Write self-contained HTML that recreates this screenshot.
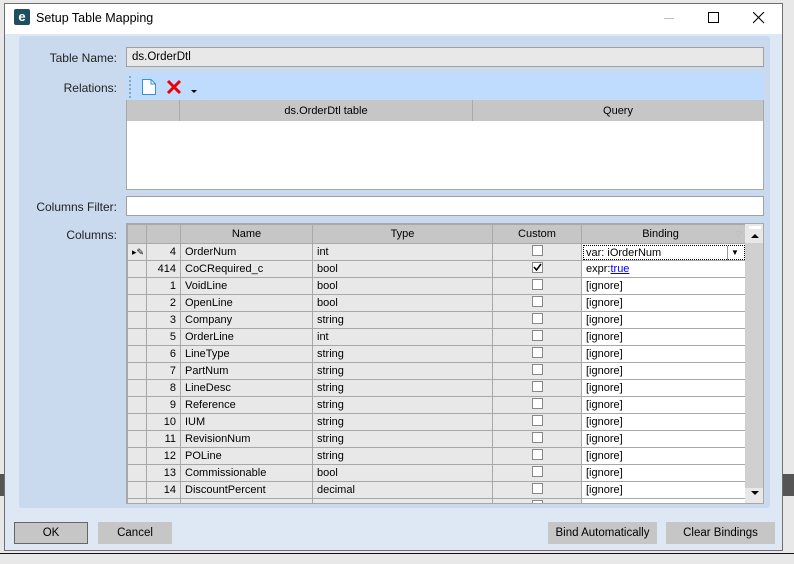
<!DOCTYPE html>
<html><head><meta charset="utf-8"><style>
*{box-sizing:border-box;margin:0;padding:0}
body{width:794px;height:564px;overflow:hidden;background:#e8e8e8;font-family:"Liberation Sans",sans-serif;font-size:11px;color:#000;position:relative}
.a{position:absolute}
.lbl{position:absolute;right:677px;text-align:right;font-size:12px;color:#222}
table{border-collapse:collapse;table-layout:fixed}
td{border:1px solid #a8a8a8;height:17px;padding:0 4px;white-space:nowrap;overflow:hidden;font-size:11px;vertical-align:middle;line-height:14px}
.btn{position:absolute;top:522px;height:22px;background:#c6c6c6;font-size:11.5px;text-align:center;line-height:22px}
.cb{display:inline-block;width:11px;height:11px;border:1px solid #888;background:#fff;vertical-align:middle;margin-top:-3px}
</style></head><body>
<div class="a" style="left:0;top:474px;width:5px;height:22px;background:#555"></div>
<div class="a" style="left:782px;top:474px;width:12px;height:22px;background:#555"></div>
<div class="a" style="left:0;top:553px;width:794px;height:1px;background:#111"></div>
<div class="a" style="left:4px;top:3px;width:779px;height:548px;border:1px solid #6f6f6f;background:#dde8f4"></div>
<div class="a" style="left:5px;top:4px;width:777px;height:30px;background:#fff"></div>
<div class="a" style="left:14px;top:9px;width:16px;height:16px;background:#1f4f5f;border-radius:2px;color:#fff;font-weight:bold;font-size:13px;line-height:15px;text-align:center">e</div>
<div class="a" style="left:36px;top:11px;font-size:12.5px">Setup Table Mapping</div>
<div class="a" style="left:664px;top:18px;width:10px;height:1px;background:#bbb"></div>
<div class="a" style="left:708px;top:12px;width:11px;height:11px;border:1px solid #000"></div>
<svg class="a" style="left:753px;top:12px" width="12" height="12"><path d="M0 0L11 11M11 0L0 11" stroke="#000" stroke-width="1.1"/></svg>
<div class="a" style="left:19px;top:36px;width:751px;height:472px;background:#c9daee;border-radius:3px"></div>
<div class="lbl" style="top:51px">Table Name:</div>
<div class="a" style="left:126px;top:47px;width:638px;height:20px;background:#e8e8e8;border:1px solid #a0a0a0;padding:3px 5px;font-size:11.5px;line-height:13px">ds.OrderDtl</div>
<div class="lbl" style="top:81px">Relations:</div>
<div class="a" style="left:126px;top:73px;width:638px;height:27px;background:#bfdcff"></div>
<div class="a" style="left:129px;top:76px;width:2px;height:22px;border-left:2px dotted #8aa"></div>
<svg class="a" style="left:141px;top:78px" width="16" height="18"><path d="M1.5 1.5H10L14.5 6V16.5H1.5Z" fill="#fff" stroke="#3a8fd8"/><path d="M10 1.5V6H14.5" fill="none" stroke="#3a8fd8"/></svg>
<svg class="a" style="left:166px;top:79px" width="16" height="16"><path d="M2 2L14 14M14 2L2 14" stroke="#e00" stroke-width="3"/></svg>
<div class="a" style="left:191px;top:90px;width:0;height:0;border-left:3px solid transparent;border-right:3px solid transparent;border-top:3px solid #000"></div>
<div class="a" style="left:126px;top:100px;width:638px;height:90px;background:#fff;border:1px solid #a8a8a8"></div>
<div class="a" style="left:127px;top:100px;width:636px;height:21px;background:#c6c6c6;display:flex;font-size:11px;line-height:22px">
<div style="width:53px;border-right:1px solid #aaa"></div><div style="width:293px;border-right:1px solid #aaa;text-align:center">ds.OrderDtl table</div><div style="flex:1;text-align:center">Query</div></div>
<div class="lbl" style="top:200px">Columns Filter:</div>
<div class="a" style="left:126px;top:196px;width:638px;height:20px;background:#fff;border:1px solid #a0a0a0"></div>
<div class="lbl" style="top:228px">Columns:</div>
<div class="a" style="left:126px;top:223px;width:638px;height:281px;background:#fff;border:1px solid #a8a8a8;overflow:hidden">
<table style="width:619px">
<colgroup><col style="width:19px"><col style="width:34px"><col style="width:132px"><col style="width:180px"><col style="width:89px"><col style="width:165px"></colgroup>
<tr style="background:#c6c6c6;text-align:center"><td style="height:19px"></td><td></td><td>Name</td><td>Type</td><td>Custom</td><td>Binding <span style="float:right;color:#bbb;font-size:9px">▽</span></td></tr>
<tbody id="b"></tbody></table>
<div class="a" style="left:618px;top:0;width:19px;height:281px;background:#e8e8e8"></div>
<div class="a" style="left:622px;top:2px;width:12px;height:3px;background:#fff"></div>
<div class="a" style="left:624px;top:10px;border-left:4px solid transparent;border-right:4px solid transparent;border-bottom:4px solid #000"></div>
<div class="a" style="left:618px;top:19px;width:19px;height:245px;background:#d0d0d0"></div>
<div class="a" style="left:624px;top:267px;border-left:4px solid transparent;border-right:4px solid transparent;border-top:4px solid #000"></div>
</div>
<div class="btn" style="left:14px;width:74px;border:1px solid #666;line-height:20px">OK</div>
<div class="btn" style="left:98px;width:74px">Cancel</div>
<div class="btn" style="left:548px;width:109px">Bind Automatically</div>
<div class="btn" style="left:666px;width:109px">Clear Bindings</div>
<script>
var r=[[4,"OrderNum","int"],[414,"CoCRequired_c","bool"],[1,"VoidLine","bool"],[2,"OpenLine","bool"],[3,"Company","string"],[5,"OrderLine","int"],[6,"LineType","string"],[7,"PartNum","string"],[8,"LineDesc","string"],[9,"Reference","string"],[10,"IUM","string"],[11,"RevisionNum","string"],[12,"POLine","string"],[13,"Commissionable","bool"],[14,"DiscountPercent","decimal"],["","",""]];
var h="";r.forEach(function(x,i){var b=i==0?'<div style="border:1px dotted #000;margin:0 -3px;padding:0 2px;height:15px;line-height:14px">var: iOrderNum<span style="float:right;width:15px;border-left:1px solid #999;text-align:center;font-size:8px">▼</span></div>':i==1?'expr:<span style="color:#00f;text-decoration:underline">true</span>':x[0]===""?"":"[ignore]";
h+='<tr style="background:#e8e8e8"><td>'+(i==0?'<span style="font-size:9px">▸✎</span>':'')+'</td><td style="text-align:right">'+x[0]+'</td><td>'+x[1]+'</td><td>'+x[2]+'</td><td style="text-align:center"><span class="cb">'+(i==1?'<svg width="9" height="9" style="display:block"><path d="M1 4L3.5 7L8 1" stroke="#000" stroke-width="1.6" fill="none"/></svg>':'')+'</span></td><td style="background:#fff">'+b+'</td></tr>';});
document.getElementById("b").innerHTML=h;
</script>
</body></html>
